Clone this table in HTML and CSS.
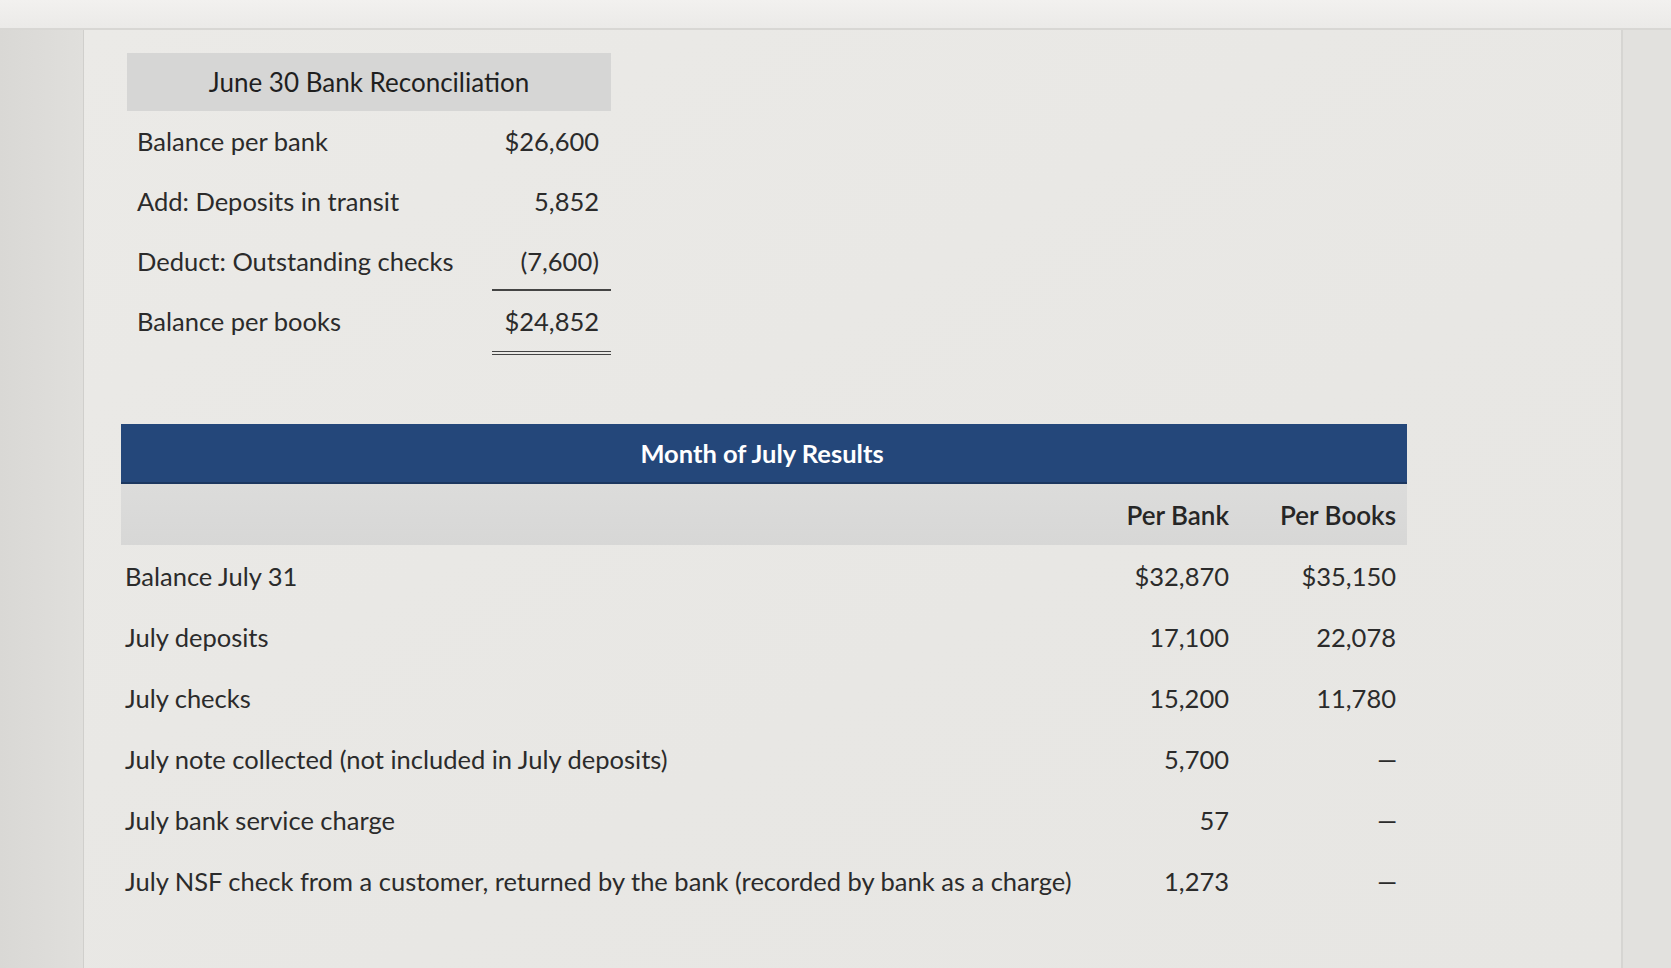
FILE: index.html
```html
<!DOCTYPE html>
<html lang="en">
<head>
<meta charset="utf-8">
<title>Bank Reconciliation</title>
<link rel="stylesheet" href="styles.css">
</head>
<body>
<div class="topband"></div>
<div class="screen">
  <div class="leftstrip"></div>
  <main class="page">
    <section class="recon">
      <div class="recon-title">June 30 Bank Reconciliation</div>
      <div class="recon-row">
        <span class="lbl">Balance per bank</span>
        <span class="val">$26,600</span>
      </div>
      <div class="recon-row">
        <span class="lbl">Add: Deposits in transit</span>
        <span class="val">5,852</span>
      </div>
      <div class="recon-row">
        <span class="lbl">Deduct: Outstanding checks</span>
        <span class="val single">(7,600)</span>
      </div>
      <div class="recon-row">
        <span class="lbl">Balance per books</span>
        <span class="val double">$24,852</span>
      </div>
    </section>

    <section class="july">
      <div class="july-bar">Month of July Results</div>
      <div class="july-head">
        <span class="c-lbl"></span>
        <span class="c-bank">Per Bank</span>
        <span class="c-books">Per Books</span>
      </div>
      <div class="july-row">
        <span class="c-lbl">Balance July 31</span>
        <span class="c-bank">$32,870</span>
        <span class="c-books">$35,150</span>
      </div>
      <div class="july-row">
        <span class="c-lbl">July deposits</span>
        <span class="c-bank">17,100</span>
        <span class="c-books">22,078</span>
      </div>
      <div class="july-row">
        <span class="c-lbl">July checks</span>
        <span class="c-bank">15,200</span>
        <span class="c-books">11,780</span>
      </div>
      <div class="july-row">
        <span class="c-lbl">July note collected (not included in July deposits)</span>
        <span class="c-bank">5,700</span>
        <span class="c-books dash">—</span>
      </div>
      <div class="july-row">
        <span class="c-lbl">July bank service charge</span>
        <span class="c-bank">57</span>
        <span class="c-books dash">—</span>
      </div>
      <div class="july-row">
        <span class="c-lbl">July NSF check from a customer, returned by the bank (recorded by bank as a charge)</span>
        <span class="c-bank">1,273</span>
        <span class="c-books dash">—</span>
      </div>
    </section>
  </main>
  <div class="rightstrip"></div>
</div>
</body>
</html>
```

FILE: styles.css
```css
html, body {
  margin: 0;
  padding: 0;
  height: 100%;
}

body {
  background: #e6e5e2;
  font-family: Lato, "Open Sans", "Liberation Sans", sans-serif;
  color: #2b2b2b;
  overflow: hidden;
}

.topband {
  height: 28px;
  background: linear-gradient(to bottom, #f2f1ef, #ebeae8);
  border-bottom: 2px solid #d8d7d4;
}

.screen {
  display: flex;
  height: 938px;
}

.leftstrip {
  width: 83px;
  flex: none;
  background: linear-gradient(to right, #d9d8d5, #e0dfdc);
  border-right: 1px solid #d0cfcc;
}

.rightstrip {
  width: 48px;
  flex: none;
  background: #e2e1de;
  border-left: 2px solid #d6d5d2;
}

.page {
  flex: 1;
  background: linear-gradient(to bottom right, #ebeae7, #e8e7e4 60%, #e7e6e3);
  padding-top: 23px;
}

/* June 30 reconciliation */
.recon {
  width: 484px;
  margin-left: 43px;
}

.recon-title {
  height: 58px;
  display: flex;
  align-items: center;
  justify-content: center;
  background: #d6d6d5;
  font-size: 26px;
  color: #1f1f1f;
}

.recon-row {
  height: 60px;
  display: flex;
  align-items: center;
  justify-content: space-between;
  font-size: 25.5px;
}

.recon-row .lbl {
  padding-left: 10px;
}

.recon-row .val {
  width: 119px;
  box-sizing: border-box;
  text-align: right;
  padding-right: 12px;
  height: 60px;
  line-height: 60px;
}

.recon-row .single {
  border-bottom: 2px solid #444;
}

.recon-row .double {
  align-self: flex-start;
  height: 64px;
  line-height: 60px;
  border-bottom: 4px double #444;
}

/* July results */
.july {
  width: 1286px;
  margin-left: 37px;
  margin-top: 73px;
}

.july-bar {
  height: 60px;
  display: flex;
  align-items: center;
  justify-content: center;
  background: #24477a;
  border-bottom: 2px solid #1b3760;
  box-sizing: border-box;
  color: #ffffff;
  font-weight: 700;
  font-size: 25.5px;
  padding-right: 4px;
}

.july-head,
.july-row {
  display: grid;
  grid-template-columns: 1fr 155px 167px;
  align-items: center;
}

.july-head {
  height: 61px;
  background: linear-gradient(to bottom, #dcdcdb, #d7d7d6);
  font-size: 26px;
  color: #262626;
}

.july-head span {
  font-weight: 600;
}

.july-row {
  height: 61px;
  font-size: 25.5px;
}

.c-lbl {
  padding-left: 4px;
}

.c-bank,
.c-books {
  text-align: right;
  padding-right: 11px;
}

.dash {
  font-size: 25px;
  padding-right: 10px;
}
```
